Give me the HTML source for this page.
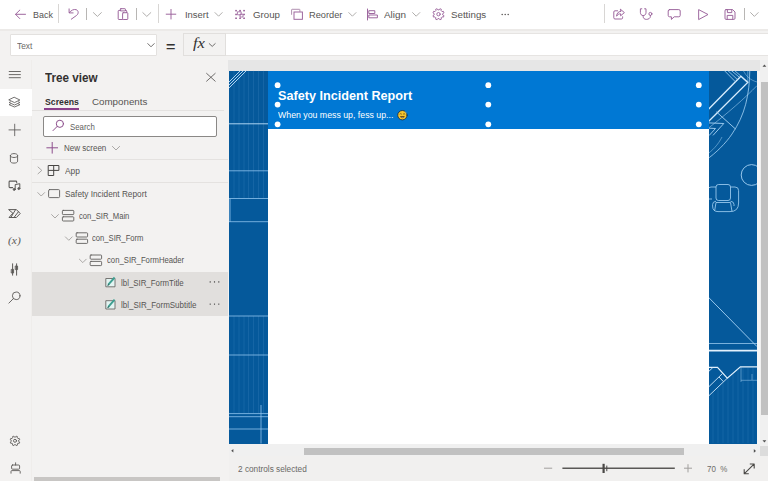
<!DOCTYPE html>
<html><head><meta charset="utf-8"><title>Power Apps Studio</title>
<style>
*{box-sizing:border-box;margin:0;padding:0}
html,body{width:768px;height:481px;overflow:hidden;background:#f3f2f1;font-family:"Liberation Sans",sans-serif;color:#323130}
.abs{position:absolute}
.tx{position:absolute;white-space:nowrap;display:block;transform-origin:0 0}
#top{left:0;top:0;width:768px;height:29px;background:#fff}
#band{left:0;top:29px;width:768px;height:31px;background:#f3f2f1}
#rail{left:0;top:60px;width:32px;height:421px;background:#f3f2f1;border-right:1px solid #efedeb}
#tree{left:32px;top:60px;width:197px;height:421px;background:#f3f2f1}
#status{left:229px;top:456px;width:539px;height:25px;background:#f1f0ef}
.sep{position:absolute;width:1px;background:#d8d6d4}
.ln{position:absolute;height:1px;background:#e4e2e0}
svg{position:absolute;left:0;top:0;overflow:visible}
</style></head><body>
<div class="abs" id="top"></div>
<div class="sep" style="left:58px;top:4px;height:19px"></div>
<div class="sep" style="left:86px;top:8px;height:12px;background:#b8b6b4"></div>
<div class="sep" style="left:136px;top:8px;height:12px;background:#b8b6b4"></div>
<div class="sep" style="left:158px;top:4px;height:19px"></div>
<div class="sep" style="left:604px;top:4px;height:19px"></div>
<div class="sep" style="left:744px;top:8px;height:12px;background:#b8b6b4"></div>
<div class="abs" id="band"></div>
<div class="abs" style="left:0;top:29px;width:768px;height:2px;background:#eceae8"></div>
<!-- formula bar -->
<div class="abs" style="left:10px;top:34px;width:147px;height:22px;border:1px solid #e3e1df;border-radius:1px;background:#fff"></div>
<div class="abs" style="left:183px;top:33px;width:43px;height:23px;background:#f3f2f1;border:1px solid #e1dfdd"></div>
<div class="abs" style="left:226px;top:32.5px;width:542px;height:23.2px;background:#fff;border-top:1px solid #e6e4e2;border-bottom:1px solid #e6e4e2"></div>
<!-- panels -->
<div class="abs" id="rail"></div>
<div class="abs" style="left:0;top:88.5px;width:32px;height:27.5px;background:#fff"></div>
<div class="abs" id="tree"></div>
<div class="abs" style="left:44px;top:108px;width:35px;height:2px;background:#8a3f8a"></div>
<div class="ln" style="left:32px;top:110px;width:192px"></div>
<div class="abs" style="left:43px;top:116px;width:174px;height:21px;border:1px solid #8a8886;border-radius:2px;background:#fff"></div>
<div class="ln" style="left:32px;top:159px;width:196px"></div>
<div class="ln" style="left:32px;top:182px;width:196px"></div>
<div class="abs" style="left:32px;top:272px;width:196px;height:44px;background:#e1dfdd"></div>
<div class="abs" style="left:34px;top:477px;width:186px;height:4px;background:#c8c6c4"></div>
<!-- canvas -->
<div class="abs" style="left:228px;top:60px;width:532px;height:11px;background:#e6e6e6"></div>
<div class="abs" style="left:229px;top:70.5px;width:528px;height:373px;background:#05599b"></div>
<svg width="768" height="481" viewBox="0 0 768 481" fill="none">
<defs><clipPath id="cl"><rect x="229" y="70.5" width="39" height="373"/></clipPath><clipPath id="cr"><rect x="708.7" y="70.5" width="48.3" height="373"/></clipPath></defs>
<g clip-path="url(#cl)" stroke="#7fb6e6">
  <g stroke-width="0.5" stroke-opacity="0.28">
    <path d="M234 70V198M239 70V198M244 70V198M248.5 70V198M253.5 70V198M258.5 70V198M263.5 70V198"/>
    <path d="M234 316V413M239 316V413M244 316V413M248.5 316V413M253.5 316V413M258.5 316V413M263.5 316V413"/>
  </g>
  <g stroke-width="0.9" stroke="#bfe0fa">
    <path d="M229 82L241 70M229 85L244 70M229 88L247 70"/>
    <path d="M229 123.8H268"/>
  </g>
  <g stroke-width="0.8" stroke="#8fc4ee">
    <path d="M229 170.8H268M229 198.5H268M229 221.7H268M230 198.5V222M229 316H268M229 355H268M229 413.6H268M229 416.7H268M229 429H268M261 405V444"/>
  </g>
</g>
<g clip-path="url(#cr)" stroke="#a8d4f5" stroke-width="0.9">
  <!-- rotated bar top -->
  <path d="M706 111.7L740.9 76.2L747.8 82.4L706 124" stroke="#d4eafc" stroke-width="1.4"/>
  <path d="M723.8 70L735.4 81.8M727.2 70L737.5 79.6M730.7 70L739.6 77.4M734 70L741 76.2" stroke-width="0.8"/>
  <path d="M716.3 111.8L735.5 129M706 122.8L723.8 123.5L713 135.4M706 128L715.5 128.5L709 135.6" stroke-width="0.9"/>
  <path d="M749.8 70C749.5 95 745 115 732 134C726 143 716 153 706 160" stroke-width="0.8"/>
  <path d="M757 85.6C745 98 728 113 706 130" stroke-width="0.7" stroke-opacity="0.8"/>
  <path d="M747.8 70V82.4M743 70C746 76 750 80 757 82" stroke-width="0.7" stroke-opacity="0.7"/>
  <path d="M722 137C718 145 712 151 706 155" stroke-opacity="0.7" stroke-width="0.7"/>
  <!-- circle -->
  <circle cx="751.6" cy="175" r="10.4"/>
  <!-- armchair -->
  <g stroke-width="0.8">
    <rect x="716" y="184.5" width="14.5" height="16" rx="2.5"/>
    <path d="M716 187H711Q708 187 708 190V200M730.5 187H735Q738.6 187 738.6 190.5V203Q738.6 211.6 730 211.6H718Q712.6 211.6 712.6 206V204.5Q712.6 201.6 716 201.2M730.5 201.2Q734 201.6 734 204.5V206M706 199H712"/>
    <path d="M716 202.5H730.5L732 211.4M716 202.5L714.6 211"/>
  </g>
  <!-- diagonal -->
  <path d="M706 294.8L757 346.6"/>
  <path d="M706 343.5H757" stroke-opacity="0.8"/>
  <path d="M706 350.6H757" stroke="#e4f2fd" stroke-width="1.6"/>
  <path d="M706 367.4H717.5L727.3 378.2L740.4 366.8H757" stroke="#e4f2fd" stroke-width="1.2"/>
  <path d="M706 374L712.8 367.6M727.3 378.2L706 398.5M722.6 373.4L706 389.5M719 377L723.4 381.6" stroke="#d0e8fb"/>
  <path d="M741 367V382M741 380.3H757M752 374V380" stroke-width="0.6" stroke-opacity="0.8"/>
  <g stroke-width="0.5" stroke-opacity="0.28" stroke="#7fb6e6">
    <path d="M713 392V443M718 388V443M723 383V443M728 378V443M733 373V443M738 369V443M743 367V443M748 367V443M753 367V443"/>
  </g>
</g>
</svg>

<div class="abs" style="left:268.4px;top:70.5px;width:440.3px;height:373px;background:#fff"></div>
<div class="abs" style="left:268.4px;top:70.5px;width:440.3px;height:58px;background:#0078d4"></div>
<!-- scrollbars -->
<div class="abs" style="left:757px;top:70.5px;width:3.5px;height:374px;background:#f6f6f6"></div>
<div class="abs" style="left:760px;top:60px;width:8px;height:386px;background:#f0f0f0"></div>
<div class="abs" style="left:761px;top:82px;width:7px;height:333px;background:#c1c1c1"></div>
<div class="abs" style="left:229px;top:444px;width:531px;height:11.5px;background:#f0f0f0"></div>
<div class="abs" style="left:304px;top:447.5px;width:380px;height:7px;background:#c1c1c1"></div>
<div class="abs" style="left:760px;top:446px;width:8px;height:10px;background:#dcdcdc"></div>
<div class="abs" id="status"></div>
<svg width="768" height="481" viewBox="0 0 768 481" fill="none" stroke-linecap="round" stroke-linejoin="round">
<!-- top bar icons (purple) -->
<g stroke="#99609a" stroke-width="0.95">
  <path d="M25.5 14.3H15.6M19.8 10.1L15.5 14.3L19.8 18.6"/>
  <path d="M69.1 8.9V12.9H73.1M69.3 12.7C71 10.2 74 8.9 76.2 9.7C78.8 10.6 78.7 13.8 76.6 15.4L71.3 19.2"/>
  <path d="M120.4 10.4H118.9Q118.2 10.4 118.2 11.1V18.8Q118.2 19.5 118.9 19.5H122.4M125.4 10.4H126Q126.7 10.4 126.7 11.1V12.5M120.9 8.7H124.9Q125.4 8.7 125.4 9.2V10.9H120.4V9.2Q120.4 8.7 120.9 8.7ZM123.2 12.7H127.2Q127.8 12.7 127.8 13.3V18.9Q127.8 19.5 127.2 19.5H123.2Q122.6 19.5 122.6 18.9V13.3Q122.6 12.7 123.2 12.7Z"/>
  <path d="M171 9.4V19M166.2 14.2H175.8"/>
  <!-- group -->
  <path d="M237.8 11.8H241.2V14.8H237.8ZM240.4 14.2H243V17H240.4Z" stroke-width="0.8"/>
  <g fill="#8d4f8d" stroke="none"><rect x="235.3" y="9.9" width="1.5" height="1.5"/><rect x="239.3" y="9.9" width="1.5" height="1.5"/><rect x="243.3" y="9.9" width="1.5" height="1.5"/><rect x="235.3" y="13.7" width="1.5" height="1.5"/><rect x="243.3" y="13.7" width="1.5" height="1.5"/><rect x="235.3" y="17.5" width="1.5" height="1.5"/><rect x="239.3" y="17.5" width="1.5" height="1.5"/><rect x="243.3" y="17.5" width="1.5" height="1.5"/></g>
  <!-- reorder -->
  <path d="M291.6 14.4V9.8Q291.6 9.3 292.1 9.3H299.4Q299.9 9.3 299.9 9.8V11.4" stroke="#a783a7" stroke-width="0.9"/><rect x="294" y="12" width="8.4" height="7.3" stroke-linejoin="miter"/>
  <!-- align -->
  <path d="M367.5 9V20M369.2 10.7H374.8V13.5H369.2ZM369.2 15H377.4V17.8H369.2Z"/>
  <!-- settings gear -->
  <path d="M442.85 14.90L444.02 15.67L443.41 17.15L442.04 16.86L441.11 17.79L441.40 19.16L439.92 19.77L439.15 18.60L437.85 18.60L437.08 19.77L435.60 19.16L435.89 17.79L434.96 16.86L433.59 17.15L432.98 15.67L434.15 14.90L434.15 13.60L432.98 12.83L433.59 11.35L434.96 11.64L435.89 10.71L435.60 9.34L437.08 8.73L437.85 9.90L439.15 9.90L439.92 8.73L441.40 9.34L441.11 10.71L442.04 11.64L443.41 11.35L444.02 12.83L442.85 13.60Z" stroke-width="0.9" stroke-linejoin="round"/>
  <circle cx="438.5" cy="14.2" r="1.7" stroke-width="0.9"/>
  <!-- share -->
  <path d="M617.6 10.8H615Q613.8 10.8 613.8 12V17.8Q613.8 19 615 19H621.4Q622.6 19 622.6 17.8V16.8M620.6 9.4L624.4 12.6L620.6 15.8V13.8C618.6 13.8 617.4 14.6 616.6 16.2C616.8 13.2 618.2 11.6 620.6 11.4Z"/>
  <!-- stethoscope -->
  <path d="M641.8 8.8H640.4V12.4C640.4 14.4 641.6 15.6 643.2 15.6C644.8 15.6 646 14.4 646 12.4V8.8H644.6M643.2 15.6V16.6C643.2 18.4 644.6 19.4 646.4 19.4C648.4 19.4 650.4 18.2 650.4 16.4V15.4"/>
  <circle cx="650.4" cy="13.9" r="1.5"/>
  <!-- comment -->
  <path d="M669.6 9.6H678.8Q680.2 9.6 680.2 11V15.4Q680.2 16.8 678.8 16.8H674.2L671.4 19.4V16.8H669.6Q668.2 16.8 668.2 15.4V11Q668.2 9.6 669.6 9.6Z"/>
  <!-- play -->
  <path d="M699 9.8L708 14.5L699 19.4Z"/>
  <!-- save -->
  <path d="M726 9.6H732.6L735 12V18.2Q735 19.4 733.8 19.4H726Q725 19.4 725 18.2V10.8Q725 9.6 726 9.6ZM727.4 9.8V12.6H731.8V9.8M727.2 19.2V15.4H732.8V19.2"/>
</g>
<!-- chevrons (gray) -->
<g stroke="#a7a5a3" stroke-width="0.9">
  <path d="M93.4 12.6L97.4 16.4L101.4 12.6"/>
  <path d="M142.8 12.6L146.8 16.4L150.8 12.6"/>
  <path d="M215 12.6L218.6 16.2L222.2 12.6"/>
  <path d="M348.8 12.6L352.4 16.2L356 12.6"/>
  <path d="M412.6 12.6L416.2 16.2L419.8 12.6"/>
  <path d="M750.6 12.6L754.4 16.4L758.2 12.6"/>
</g>
<g fill="#605e5c" stroke="none"><circle cx="502.2" cy="14.5" r="0.8"/><circle cx="505.2" cy="14.5" r="0.8"/><circle cx="508.2" cy="14.5" r="0.8"/></g>
<!-- formula bar -->
<g stroke="#605e5c" stroke-width="0.9">
  <path d="M147.8 43.6L151 46.8L154.2 43.6"/>
  <path d="M209.2 43.6L212.2 46.4L215.2 43.6"/>
</g>

<!-- rail icons -->
<g stroke="#5c5a58" stroke-width="0.9">
  <path d="M9.2 71.5H20.4M9.2 74.6H20.4M9.2 77.7H20.4" stroke-width="0.9"/>
  <path d="M14.5 97.4L19.9 100L14.5 102.6L9.1 100ZM10.4 101.9L9.1 102.5L14.5 105L19.9 102.5L18.6 101.9M10.4 104.1L9.1 104.7L14.5 107L19.9 104.7L18.6 104.1" stroke-width="0.85"/>
  <path d="M14.7 124.2V135.7M9 129.9H20.4" stroke-width="0.85"/>
  <path d="M10.4 155.6V161.2C10.4 162.4 12 163.1 14 163.1C16 163.1 17.6 162.4 17.6 161.2V155.6M10.4 155.6C10.4 154.4 12 153.6 14 153.6C16 153.6 17.6 154.4 17.6 155.6C17.6 156.8 16 157.5 14 157.5C12 157.5 10.4 156.8 10.4 155.6Z"/>
  <path d="M12.6 187.6H9.9Q9.1 187.6 9.1 186.8V181.9Q9.1 181.1 9.9 181.1H15.9Q16.7 181.1 16.7 181.9V182.8" stroke-width="1.1"/><path d="M15.2 189.2V184.6L19.8 183.7V188.4" stroke-width="1"/>
  <circle cx="14.2" cy="189.4" r="1" fill="#5c5a58"/><circle cx="18.8" cy="188.6" r="1" fill="#5c5a58"/>
  <path d="M9 209.6H16.4L20.2 213.5L16.4 217.5H9L12.6 213.5ZM11 217.2L15.4 209.9M14.2 217.2L18.4 211.8" stroke-width="1"/>
  <path d="M12.6 263.8V275.2M16.6 263.8V275.2" stroke-width="1"/><path d="M11.6 269.4H13.6V273H11.6ZM15.6 266H17.6V269.6H15.6Z" fill="#5c5a58" stroke-width="0.8"/>
  <circle cx="16.2" cy="295.8" r="3.8"/><path d="M13.4 298.6L8.9 303.1"/>
  <!-- gear bottom -->
  <path d="M18.76 441.46L19.75 442.12L19.22 443.39L18.06 443.16L17.26 443.96L17.49 445.12L16.22 445.65L15.56 444.66L14.44 444.66L13.78 445.65L12.51 445.12L12.74 443.96L11.94 443.16L10.78 443.39L10.25 442.12L11.24 441.46L11.24 440.34L10.25 439.68L10.78 438.41L11.94 438.64L12.74 437.84L12.51 436.68L13.78 436.15L14.44 437.14L15.56 437.14L16.22 436.15L17.49 436.68L17.26 437.84L18.06 438.64L19.22 438.41L19.75 439.68L18.76 440.34Z" stroke-width="0.9" stroke-linejoin="round"/>
  <circle cx="15" cy="440.8" r="1.5" stroke-width="0.9"/>
  <!-- bot -->
  <path d="M15.6 462.8V465M12.6 465H18.6Q19.6 465 19.6 466V468.2Q19.6 469.2 18.6 469.2H12.6Q11.6 469.2 11.6 468.2V466Q11.6 465 12.6 465ZM11 473.2V471.4Q11 470.6 11.8 470.6H19.4Q20.2 470.6 20.2 471.4V473.2"/>
</g>
<!-- tree panel icons -->
<g stroke="#605e5c" stroke-width="0.9">
  <path d="M206.6 73.4L215.2 81.2M215.2 73.4L206.6 81.2"/>
  <path d="M112.4 146.4L116 150L119.6 146.4" stroke="#a19f9d"/>
  <path d="M38 167L41.8 170.4L38 173.8" stroke="#a19f9d"/>
  <path d="M37.8 192.6L41.2 196L44.6 192.6" stroke="#a19f9d"/>
  <path d="M51.6 214.6L55 218L58.4 214.6" stroke="#a19f9d"/>
  <path d="M65.4 236.9L68.8 240.3L72.2 236.9" stroke="#a19f9d"/>
  <path d="M79.4 259.2L82.8 262.6L86.2 259.2" stroke="#a19f9d"/>
  <!-- app icon -->
  <path d="M48.6 165.5H58.9V170.4H53.7V175.5H48.6ZM53.7 165.5V170.4M48.6 170.4H53.7" stroke="#484644" stroke-width="1" stroke-linejoin="miter"/>
  <!-- screen icon -->
  <rect x="48.6" y="189.6" width="11" height="8" rx="1"/>
  <!-- containers -->
  <rect x="62.4" y="210.4" width="11.4" height="4.2" rx="0.8"/><rect x="62.4" y="216.8" width="11.4" height="4.2" rx="0.8"/>
  <rect x="76.2" y="232.8" width="11.4" height="4.2" rx="0.8"/><rect x="76.2" y="239.2" width="11.4" height="4.2" rx="0.8"/>
  <rect x="90.2" y="255" width="11.4" height="4.2" rx="0.8"/><rect x="90.2" y="261.4" width="11.4" height="4.2" rx="0.8"/>
</g>
<!-- search icon (purple) & new screen plus -->
<g stroke="#8d4f8d" stroke-width="1">
  <circle cx="59.9" cy="123.8" r="3.6"/><path d="M57.2 126.4L53 130.6"/>
  <path d="M52.2 142.4V153.2M46.8 147.8H57.6"/>
</g>
<!-- label icons (teal) -->
<g><rect x="106.2" y="278.5" width="8.8" height="8.3" fill="#e3f4f2" stroke="#6b6967" stroke-width="0.9"/><path d="M108.3 284.7L114.6 277.5" stroke="#3f9f91" stroke-width="1.9" stroke-linecap="butt"/><path d="M107.6 285.7L109 284.1" stroke="#2f6f66" stroke-width="1.2" stroke-linecap="butt"/></g>
<g><rect x="106.2" y="300.7" width="8.8" height="8.3" fill="#e3f4f2" stroke="#6b6967" stroke-width="0.9"/><path d="M108.3 306.9L114.6 299.7" stroke="#3f9f91" stroke-width="1.9" stroke-linecap="butt"/><path d="M107.6 307.9L109 306.3" stroke="#2f6f66" stroke-width="1.2" stroke-linecap="butt"/></g>
<g fill="#323130" stroke="none">
  <circle cx="210.2" cy="281.9" r="0.65"/><circle cx="214.5" cy="281.9" r="0.65"/><circle cx="218.8" cy="281.9" r="0.65"/>
  <circle cx="210.2" cy="304.1" r="0.65"/><circle cx="214.5" cy="304.1" r="0.65"/><circle cx="218.8" cy="304.1" r="0.65"/>
</g>
<!-- selection handles -->
<g fill="#fff" stroke="none">
  <circle cx="277.6" cy="85.2" r="2.9"/><circle cx="277.6" cy="104.6" r="2.9"/><circle cx="277.6" cy="124.3" r="2.9"/>
  <circle cx="488.3" cy="85.2" r="2.9"/><circle cx="488.3" cy="104.6" r="2.9"/><circle cx="488.3" cy="124.3" r="2.9"/>
  <circle cx="698.8" cy="85.2" r="2.9"/><circle cx="698.8" cy="104.6" r="2.9"/><circle cx="698.8" cy="124.3" r="2.9"/>
</g>
<!-- emoji -->
<g>
  <circle cx="402.4" cy="115.2" r="4.7" fill="#f6c52e" stroke="#16324f" stroke-width="0.9"/>
  <path d="M399.9 116.2Q402.4 120.4 404.9 116.2Z" fill="#4a2c0c" stroke="none"/>
  <path d="M400.4 117Q402.4 117.8 404.4 117Z" fill="#fff" stroke="none"/>
  <path d="M399.9 114Q400.8 113 401.6 114M403.2 114Q404 113 404.9 114" stroke="#4a2c0c" stroke-width="0.6"/>
  <path d="M405.6 111.2Q406.8 112.6 406.2 113.4Q405.2 113.2 405.6 111.2Z" fill="#9bd4f6" stroke="none"/>
</g>
<!-- scroll arrows -->
<g fill="#505050" stroke="none">
  <path d="M764.4 64.4L766.3 66.8H762.5Z"/>
  <path d="M764.4 442.6L766.3 440.2H762.5Z"/>
  <path d="M231.2 450.8L233.4 449V452.6Z"/>
  <path d="M756 450.9L753.8 449V452.8Z"/>
</g>
<!-- status bar -->
<g stroke="#a19f9d" stroke-width="1" stroke-linecap="butt">
  <path d="M544 468.2H552.2"/>
  <path d="M684 468.2H692M688 464.2V472.4"/>
</g>
<g stroke="#4a4846" stroke-linecap="butt">
  <path d="M562.4 468.3H674.8" stroke-width="1.6" stroke="#5a5856"/>
  <path d="M603.6 463.8V473" stroke-width="2.2"/>
  <path d="M606.8 465.6V471.2" stroke-width="1"/>
  <path d="M744.4 473.6L754 464.2M749.8 464H754.2V468.4M744.2 469.2V473.8H748.8" stroke-width="1.1"/>
</g>
</svg>

<span id="t_back" class="tx" style="left:33.20px;top:10.10px;font-size:9.7px;line-height:9.7px;font-weight:400;color:#565452;transform:scaleX(0.9236);font-family:'Liberation Sans',sans-serif">Back</span>
<span id="t_insert" class="tx" style="left:184.60px;top:10.10px;font-size:9.7px;line-height:9.7px;font-weight:400;color:#565452;transform:scaleX(0.9738);font-family:'Liberation Sans',sans-serif">Insert</span>
<span id="t_group" class="tx" style="left:253.40px;top:10.10px;font-size:9.7px;line-height:9.7px;font-weight:400;color:#565452;transform:scaleX(1.0023);font-family:'Liberation Sans',sans-serif">Group</span>
<span id="t_reorder" class="tx" style="left:308.80px;top:10.10px;font-size:9.7px;line-height:9.7px;font-weight:400;color:#565452;transform:scaleX(0.9543);font-family:'Liberation Sans',sans-serif">Reorder</span>
<span id="t_align" class="tx" style="left:384.40px;top:10.10px;font-size:9.7px;line-height:9.7px;font-weight:400;color:#565452;transform:scaleX(1.0210);font-family:'Liberation Sans',sans-serif">Align</span>
<span id="t_settings" class="tx" style="left:451.00px;top:10.10px;font-size:9.7px;line-height:9.7px;font-weight:400;color:#565452;transform:scaleX(1.0053);font-family:'Liberation Sans',sans-serif">Settings</span>
<span id="t_text" class="tx" style="left:17.00px;top:41.71px;font-size:9.2px;line-height:9.2px;font-weight:400;color:#6a6866;transform:scaleX(0.9075);font-family:'Liberation Sans',sans-serif">Text</span>
<span id="t_eq" class="tx" style="left:166.00px;top:40.91px;font-size:12.5px;line-height:12.5px;font-weight:700;color:#323130;transform:scaleX(1.2855);font-family:'Liberation Sans',sans-serif">=</span>
<span id="t_fx" class="tx" style="left:193.20px;top:35.60px;font-size:15px;line-height:15px;font-weight:400;color:#323130;transform:scaleX(1.1082);font-family:'Liberation Serif',serif;font-style:italic">fx</span>
<span id="t_var" class="tx" style="left:8.40px;top:236.01px;font-size:10.4px;line-height:10.4px;font-weight:400;color:#5c5a58;transform:scaleX(1.1085);font-family:'Liberation Serif',serif;font-style:italic">(x)</span>
<span id="t_tree" class="tx" style="left:44.50px;top:72.00px;font-size:12.2px;line-height:12.2px;font-weight:700;color:#323130;transform:scaleX(0.9583);font-family:'Liberation Sans',sans-serif">Tree view</span>
<span id="t_screens" class="tx" style="left:44.60px;top:97.01px;font-size:9.8px;line-height:9.8px;font-weight:700;color:#323130;transform:scaleX(0.8888);font-family:'Liberation Sans',sans-serif">Screens</span>
<span id="t_comp" class="tx" style="left:91.70px;top:97.01px;font-size:9.8px;line-height:9.8px;font-weight:400;color:#565452;transform:scaleX(0.9971);font-family:'Liberation Sans',sans-serif">Components</span>
<span id="t_search" class="tx" style="left:69.50px;top:122.61px;font-size:8.4px;line-height:8.4px;font-weight:400;color:#605e5c;transform:scaleX(0.9342);font-family:'Liberation Sans',sans-serif">Search</span>
<span id="t_new" class="tx" style="left:64.00px;top:143.70px;font-size:8.3px;line-height:8.3px;font-weight:400;color:#565452;transform:scaleX(0.9655);font-family:'Liberation Sans',sans-serif">New screen</span>
<span id="t_app" class="tx" style="left:65.10px;top:167.01px;font-size:8.3px;line-height:8.3px;font-weight:400;color:#565452;transform:scaleX(1.0091);font-family:'Liberation Sans',sans-serif">App</span>
<span id="t_sir" class="tx" style="left:64.90px;top:189.51px;font-size:8.3px;line-height:8.3px;font-weight:400;color:#565452;transform:scaleX(0.9950);font-family:'Liberation Sans',sans-serif">Safety Incident Report</span>
<span id="t_main" class="tx" style="left:79.00px;top:211.81px;font-size:8.3px;line-height:8.3px;font-weight:400;color:#565452;transform:scaleX(0.9261);font-family:'Liberation Sans',sans-serif">con_SIR_Main</span>
<span id="t_form" class="tx" style="left:92.40px;top:234.10px;font-size:8.3px;line-height:8.3px;font-weight:400;color:#565452;transform:scaleX(0.9230);font-family:'Liberation Sans',sans-serif">con_SIR_Form</span>
<span id="t_hdr" class="tx" style="left:107.00px;top:256.40px;font-size:8.3px;line-height:8.3px;font-weight:400;color:#565452;transform:scaleX(0.9299);font-family:'Liberation Sans',sans-serif">con_SIR_FormHeader</span>
<span id="t_title" class="tx" style="left:120.70px;top:278.81px;font-size:8.3px;line-height:8.3px;font-weight:400;color:#565452;transform:scaleX(0.9487);font-family:'Liberation Sans',sans-serif">lbl_SIR_FormTitle</span>
<span id="t_sub" class="tx" style="left:120.70px;top:301.01px;font-size:8.3px;line-height:8.3px;font-weight:400;color:#565452;transform:scaleX(0.9617);font-family:'Liberation Sans',sans-serif">lbl_SIR_FormSubtitle</span>
<span id="t_h1" class="tx" style="left:278.20px;top:90.01px;font-size:12.3px;line-height:12.3px;font-weight:700;color:#ffffff;transform:scaleX(1.0282);font-family:'Liberation Sans',sans-serif">Safety Incident Report</span>
<span id="t_h2" class="tx" style="left:278.20px;top:111.21px;font-size:8.8px;line-height:8.8px;font-weight:400;color:#ffffff;transform:scaleX(0.9958);font-family:'Liberation Sans',sans-serif">When you mess up, fess up...</span>
<span id="t_status" class="tx" style="left:237.60px;top:464.82px;font-size:8.4px;line-height:8.4px;font-weight:400;color:#6a6866;transform:scaleX(0.9851);font-family:'Liberation Sans',sans-serif">2 controls selected</span>
<span id="t_zoom" class="tx" style="left:707.40px;top:465.01px;font-size:8.4px;line-height:8.4px;font-weight:400;color:#6e6c6a;transform:scaleX(0.9523);font-family:'Liberation Sans',sans-serif">70  %</span>
</body></html>
